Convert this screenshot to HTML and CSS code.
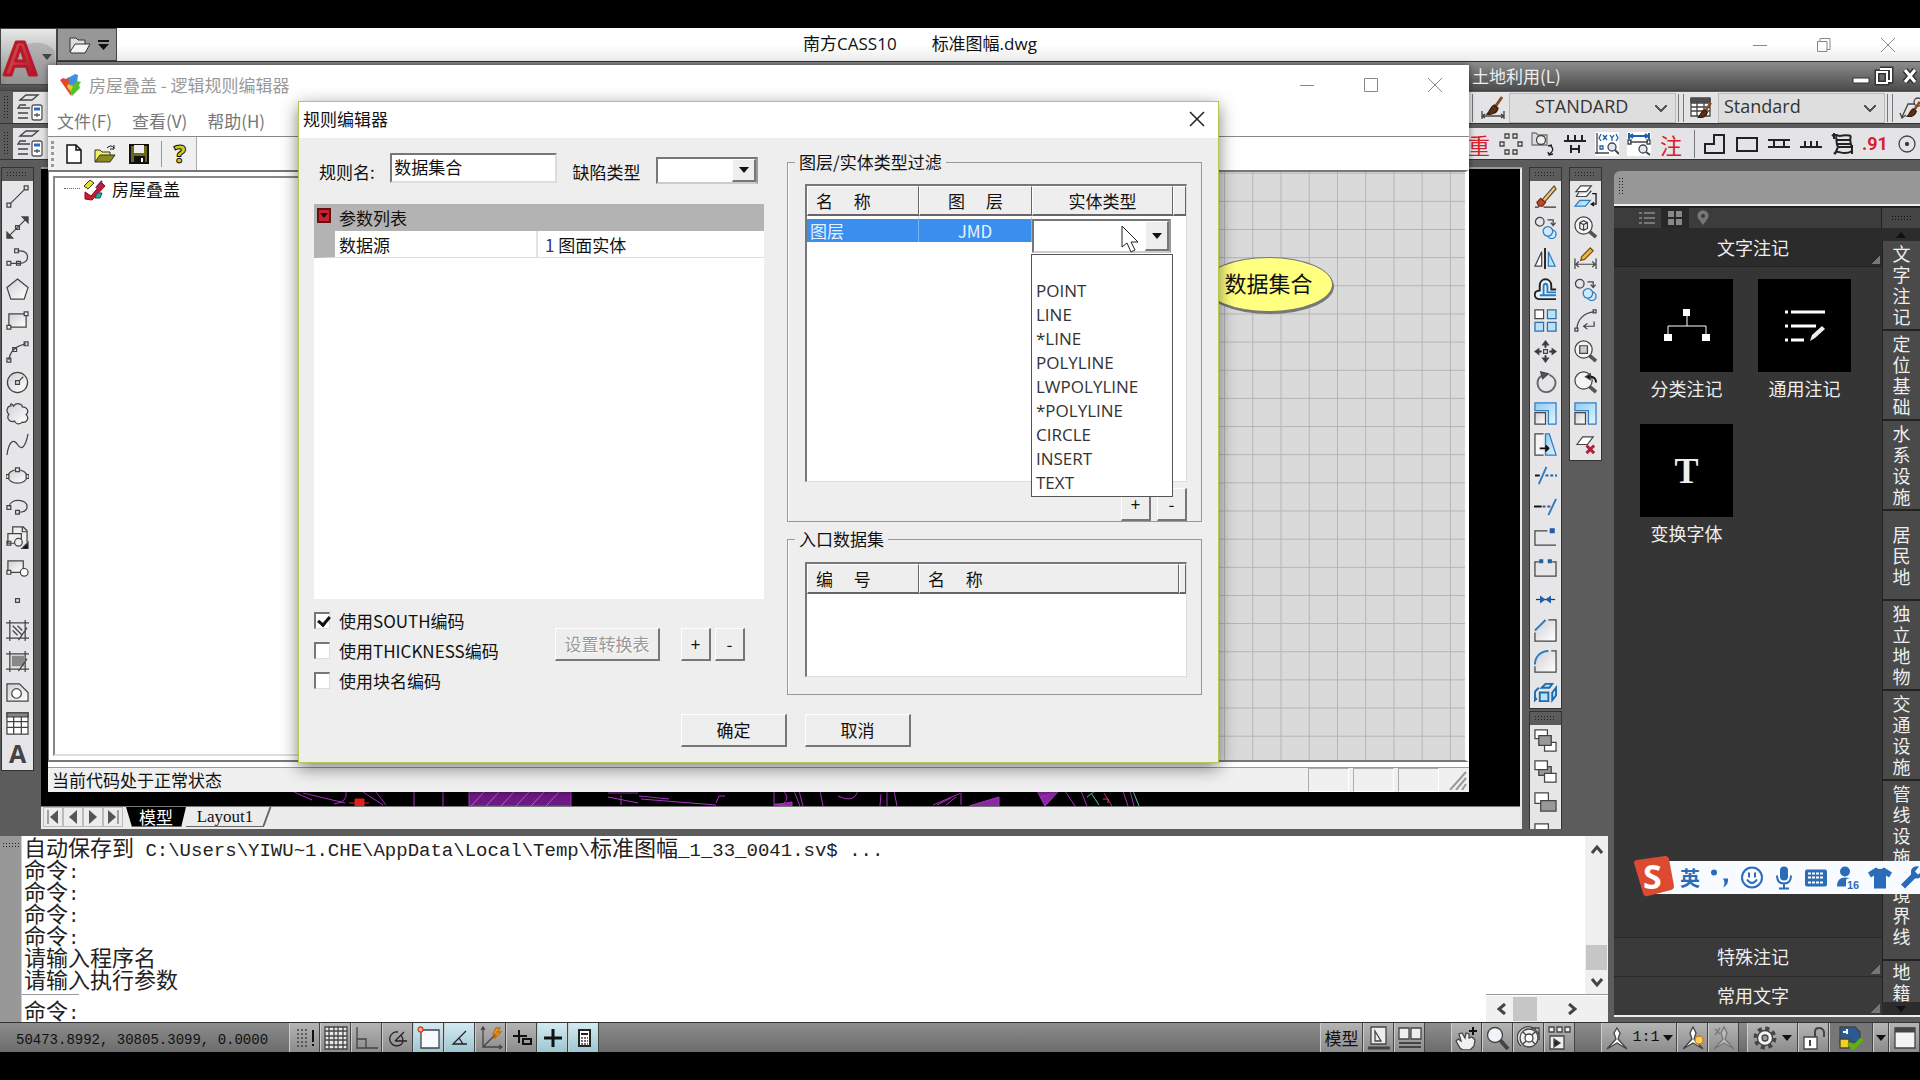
FILE: index.html
```html
<!DOCTYPE html>
<html lang="zh-CN">
<head>
    <meta charset="UTF-8">
    <meta name="viewport" content="width=device-width, initial-scale=1.0">
    <title>南方CASS10 - 标准图幅.dwg</title>
    <link rel="stylesheet" href="styles.css">
</head>
<body>
    <!-- shared icons -->
    <svg class="defs" width="0" height="0">
        <defs>
            <linearGradient id="blueFill" x1="0" y1="0" x2="1" y2="1"><stop offset="0" stop-color="#8fcdf0"/><stop offset="1" stop-color="#e2f4fd"/></linearGradient>
            <linearGradient id="grayFill" x1="0" y1="0" x2="1" y2="1"><stop offset="0" stop-color="#d0d0d4"/><stop offset="1" stop-color="#fff"/></linearGradient>
            <linearGradient id="redFill" x1="0" y1="0" x2="1" y2="1"><stop offset="0" stop-color="#f0606a"/><stop offset="1" stop-color="#a00a1c"/></linearGradient>
        </defs>
        <symbol id="i-copy" viewBox="0 0 24 24"><circle cx="6" cy="6" r="4.5"/><path d="M14 4h6v5M17.500 7l2.500 3 2.500-3"/><circle cx="18.500" cy="19" r="4.500" fill="#cfeafa" stroke="#2f7cc0"/><circle cx="14.500" cy="16" r="5" fill="#cfeafa" stroke="#2f7cc0"/></symbol>
        <symbol id="i-scale" viewBox="0 0 24 24"><path d="M1 9V1h22v22h-8V9z" fill="url(#blueFill)" stroke="#2f7cc0"/><path d="M1 11h11v12H1z" fill="url(#grayFill)"/></symbol>
        <symbol id="i-layers" viewBox="0 0 28 28"><path d="M5 7l6-5h12l-6 5zM11 12H5l-2 3h12M3 20h10M3 25h10M15 7H5"/><rect x="17" y="12" width="10" height="15" rx="2" fill="#fff" stroke="#555"/><path d="M19 16h6" stroke="#2769c4" stroke-width="3"/><path d="M19 22h6M22 20v4" stroke="#555"/></symbol>
        <symbol id="i-brush" viewBox="0 0 24 24"><path d="M12 14l9-13" stroke="#8a4a1c" stroke-width="3"/><path d="M13 9l4 3c-1 5-6 7-11 6 3-2 3-7 7-9z" fill="#5c2f18" stroke="#3a1c0c"/></symbol>
        <symbol id="i-down" viewBox="0 0 10 6"><path d="M0 0h10L5 6z" fill="#111" stroke="none"/></symbol>
    </svg>

    <div class="app">
        <header class="titlebar">
            <div class="quick">
                <button class="plain" aria-label="打开">
                    <svg width="24" height="20" viewBox="0 0 24 20"><path d="M2 17V3h6l2 2h7v4" fill="#ddd" stroke="#333"/><path d="M2 17l5-8h15l-5 9H4z" fill="#f4f4f4" stroke="#333"/></svg>
                </button>
                <svg width="11" height="10" viewBox="0 0 11 10"><path d="M0 1h11" stroke="#111" stroke-width="2"/><path d="M0 4h11L5.500 10z" fill="#111"/></svg>
            </div>
            <h1 class="title"><span>南方CASS10</span><span>标准图幅.dwg</span></h1>
            <div class="controls">
                <button class="plain" aria-label="最小化"><svg width="16" height="16" viewBox="0 0 16 16"><path d="M1 8.500h14"/></svg></button>
                <button class="plain" aria-label="还原"><svg width="16" height="16" viewBox="0 0 16 16"><path d="M4 4.500V1.500h10v11h-3M1.500 4.500h9.500v10H1.500z"/></svg></button>
                <button class="plain" aria-label="关闭"><svg width="16" height="16" viewBox="0 0 16 16"><path d="M1 1l14 14M15 1L1 15"/></svg></button>
            </div>
        </header>

        <nav class="menubar">
            <a href="#">土地利用(L)</a>
            <div class="mdi">
                <svg width="72" height="20" viewBox="0 0 72 20"><path d="M1 12h16v5H1z" fill="#fff" stroke="#333"/><path d="M28 3h11v12h-3M25 6h10v11H25z" fill="none" stroke="#333" stroke-width="5"/><path d="M28 3h11v12h-3M25 6h10v11H25z" fill="none" stroke="#fff" stroke-width="2"/><path d="M53 4l10 12M63 4L53 16" stroke="#333" stroke-width="6"/><path d="M53 4l10 12M63 4L53 16" stroke="#fff" stroke-width="3"/></svg>
            </div>
        </nav>

        <div class="toolrow">
            <div class="row-start"><i class="grip-v"></i><button class="tool" aria-label="图层"><svg width="28" height="28"><use href="#i-layers"/></svg></button></div>
            <div class="row-end styles-row">
                <i class="sep"></i>
                <button class="tool" aria-label="标注样式"><svg width="24" height="24" viewBox="0 0 24 24"><use href="#i-brush"/><path d="M1 15v8M23 15v8M2 20h20M4 18l-3 2 3 2M20 18l3 2-3 2"/></svg></button>
                <select class="style-select center" aria-label="标注样式名"><option>STANDARD</option></select>
                <i class="sep double"></i>
                <button class="tool" aria-label="表格样式"><svg width="24" height="24" viewBox="0 0 24 24"><path d="M1 2h19v18H1zM1 7h19M1 11h19M1 15h19M7 7v13M14 7v13" fill="#fff"/><path d="M1 3h19v3H1z" fill="#555"/><g transform="translate(3 6) scale(.85)"><use href="#i-brush" width="24" height="24"/></g></svg></button>
                <select class="style-select" aria-label="表格样式名"><option>Standard</option></select>
                <i class="sep double"></i>
                <button class="tool" aria-label="多重引线样式"><svg width="24" height="24" viewBox="0 0 24 24"><path d="M3 21L9 8h7M1 17l2 5 4-3"/><circle cx="19" cy="6" r="4"/><g transform="translate(3 5) scale(.85)"><use href="#i-brush" width="24" height="24"/></g></svg></button>
            </div>
        </div>

        <div class="toolrow">
            <div class="row-start"><i class="grip-v"></i><button class="tool" aria-label="图层工具"><svg width="28" height="28"><use href="#i-layers"/></svg></button></div>
            <div class="row-end cass-row">
                <button class="tool red">重</button>
                <button class="tool" aria-label="编组"><svg width="24" height="24" viewBox="0 0 24 24"><path d="M6 2h4v4H6zM14 2h4v4h-4zM1 10h4v4H1zM19 10h4v4h-4zM6 18h4v4H6zM14 18h4v4h-4z"/></svg></button>
                <button class="tool" aria-label="查看"><svg width="24" height="24" viewBox="0 0 24 24"><path d="M1 1h4l2 2h9v10H1z" fill="#ddd" stroke="#777"/><circle cx="10" cy="8" r="4.500" fill="#eee"/><path d="M20 14c3 3 2 6-2 8M21 13l-4 1M17 20l1 3 4-1" stroke="#222"/></svg></button>
                <button class="tool" aria-label="坎"><svg width="24" height="24" viewBox="0 0 24 24" class="heavy"><path d="M1 9h22M5 9V3M12 9V3M19 9V3M8 13v8M16 13v8M8 17h8"/></svg></button>
                <button class="tool" aria-label="坐标"><svg width="24" height="24" viewBox="0 0 24 24"><path d="M0 0h24v24H0z" fill="#fff" stroke="none"/><path d="M2 1v21M0 21h14"/><path d="M6 2l-2 4 2 3M8 3l4 5M12 3L8 8M15 3l2 3 2-3M17 6v3M21 2l2 4-2 3M5 14h3v3H5z" stroke="#1f5fa8"/><circle cx="17" cy="15" r="4" fill="#dfe9f5"/><path d="M20 18l4 4" stroke-width="2"/></svg></button>
                <button class="tool" aria-label="距离"><svg width="24" height="24" viewBox="0 0 24 24"><path d="M0 0h24v24H0z" fill="#fff" stroke="none"/><path d="M2 1v6M22 1v6M3 4h18M6 2L3 4l3 2M18 2l3 2-3 2" stroke="#1f5fa8" stroke-width="2"/><path d="M3 10h18M1 8h3v4H1zM20 8h3v4h-3z"/><circle cx="16" cy="17" r="4" fill="#dfe9f5"/><path d="M19 20l4 3" stroke-width="2"/></svg></button>
                <button class="tool red">注</button>
                <i class="sep"></i>
                <button class="tool" aria-label="多边房屋"><svg width="24" height="24" viewBox="0 0 24 24" class="heavy"><path d="M2 21V12h9V3h10v18z"/></svg></button>
                <button class="tool" aria-label="四点房屋"><svg width="24" height="24" viewBox="0 0 24 24" class="heavy"><path d="M2 6h20v13H2z"/></svg></button>
                <button class="tool" aria-label="围墙"><svg width="24" height="24" viewBox="0 0 24 24" class="heavy"><path d="M1 8h22M1 15h22M7 8v7M17 8v7"/></svg></button>
                <button class="tool" aria-label="陡坎"><svg width="24" height="24" viewBox="0 0 24 24" class="heavy"><path d="M1 15h22M6 15V9M12 15V9M18 15V9"/></svg></button>
                <button class="tool" aria-label="楼梯"><svg width="24" height="24" viewBox="0 0 24 24"><path d="M1 4c3-3 5 0 8 0s6-2 11 0M5 4c1 6 0 8 2 11M20 4c-2 4 0 8 1 12M5 8h14M6 12h14M7 15h15M3 22c4-6 8 3 18-3M7 15l-3 7M3 1v6M21 13v9" stroke="#222" stroke-width="2"/></svg></button>
                <button class="tool red bold">.91</button>
                <button class="tool" aria-label="控制点"><svg width="24" height="24" viewBox="0 0 24 24"><circle cx="12" cy="12" r="8"/><circle cx="12" cy="12" r="1.500" fill="#222"/></svg></button>
            </div>
        </div>

        <button class="app-button" aria-label="应用程序菜单">
            <svg width="57" height="56" viewBox="0 0 57 56"><path d="M20 18q22-10 35 4v33H4z" fill="#999" opacity=".5"/><text x="3" y="46" class="logo-a" fill="url(#redFill)">A</text><path d="M42 25h10l-5 6z" fill="#444"/></svg>
        </button>

        <main class="workspace">
            <div class="left">
                <div class="canvas-zone">
                    <div class="dock">
                        <i class="grip-h"></i>
                        <button><svg viewBox="0 0 24 24"><path d="M4 20L20 4M1 19h4v4H1zM19 1h4v4h-4z"/></svg></button>
                        <button><svg viewBox="0 0 24 24"><path d="M4 20L20 4M10 10h4v4h-4z"/><path d="M1 17v6h6zM17 1h6v6z" fill="#444"/></svg></button>
                        <button><svg viewBox="0 0 24 24"><path d="M12 4h3c10 0 10 13 0 13H5M9 2h4v4H9zM1 15h4v4H1zM11 15h4v4h-4z"/></svg></button>
                        <button><svg viewBox="0 0 24 24"><path d="M12 1l11 9-4 12H5L1 10z" fill="url(#grayFill)"/></svg></button>
                        <button><svg viewBox="0 0 24 24"><path d="M3 5h18v14H3z" fill="url(#grayFill)"/><path d="M1 17h4v4H1zM19 3h4v4h-4z" fill="#eee"/></svg></button>
                        <button><svg viewBox="0 0 24 24"><path d="M3 21C4 12 10 6 21 4M1 19h4v4H1zM19 2h4v4h-4zM7 8h4v4H7z"/></svg></button>
                        <button><svg viewBox="0 0 24 24"><circle cx="12" cy="12" r="10.500" fill="url(#grayFill)"/><path d="M10 10h4v4h-4zM14 10l4-4"/></svg></button>
                        <button><svg viewBox="0 0 24 24"><path d="M8 4c3-4 9-2 9 1 6 0 7 6 4 8 4 4 0 9-4 8-3 3-7 2-8-1-5 2-9-3-6-7-4-4-1-9 2-9-1-3 2-3 3 1z" fill="url(#grayFill)"/></svg></button>
                        <button><svg viewBox="0 0 24 24"><path d="M1 23C3 8 8 6 12 12s8 4 11-11"/></svg></button>
                        <button><svg viewBox="0 0 24 24"><ellipse cx="12" cy="13" rx="10" ry="7" fill="url(#grayFill)"/><path d="M10 4h4v4h-4zM0 11h3v4H0zM21 11h3v4h-3z" fill="#eee"/></svg></button>
                        <button><svg viewBox="0 0 24 24"><path d="M3 12C5 3 22 4 22 12c0 4-4 6-9 6M1 11h4v4H1zM10 16h4v4h-4z"/></svg></button>
                        <button><svg viewBox="0 0 24 24"><path d="M7 8V1h11l4 4v12M17 1v5h5M2 8h14v10H2zM1 16h4v4H1z" fill="#eee"/><circle cx="13" cy="17" r="4" fill="#eee"/><path d="M23 17v7h-7z" fill="#111"/></svg></button>
                        <button><svg viewBox="0 0 24 24"><path d="M2 4h16v12H2z" fill="url(#grayFill)"/><circle cx="19" cy="16" r="4" fill="#fff"/><path d="M1 14h4v4H1z" fill="#eee"/></svg></button>
                        <button><svg viewBox="0 0 24 24"><path d="M10 11h4v4h-4z"/></svg></button>
                        <button><svg viewBox="0 0 24 24"><path d="M4 1v22M20 1v22M0 4h24M0 20h24M7 7l10 10M7 12l5 5M12 7l5 5M13 22L22 9"/></svg></button>
                        <button><svg viewBox="0 0 24 24"><path d="M6 6h13v11H6z" fill="#888" stroke="none"/><path d="M4 1v22M20 1v22M0 4h24M0 20h24M13 22L22 9"/></svg></button>
                        <button><svg viewBox="0 0 24 24"><path d="M1 3h13l9 9v9H1z" fill="url(#grayFill)"/><circle cx="11" cy="13" r="5" fill="#fff"/></svg></button>
                        <button><svg viewBox="0 0 24 24"><path d="M1 1h22v22H1zM1 10h22M1 16h22M8 5v18M16 5v18" fill="#fff"/><path d="M1 1h22v4H1z" fill="#888"/></svg></button>
                        <button class="letter">A</button>
                    </div>

                    <div class="drawing">
                        <div class="model-space">
                            <svg width="1478" height="15" viewBox="0 0 1478 15" fill="none" stroke="#b030c8">
                                <path d="M253 1l18 8M262 2l42 10M305 1q2 10-12 12M322 1l20 13M335 1l10 13M373 0v15M402 0v15M567 2h30M567 6l30 6M580 4v10M598 5l30 3M600 8l75 6M675 12l3-7h6M733 0v15M742 0q8 6 0 13h-8M753 0l6 15M758 0l4 15M779 0l3 15M797 5q16 8 20-5M839 15l1-12M846 0v15M853 0l3 15M892 14l28-12v12M896 14l14-7M905 14l10-8M1040 0l6 15M1063 2l8 13M1082 0l5 15M1089 0l4 15"/>
                                <path d="M428 0h102v15H428z" fill="#6a1a80"/>
                                <path d="M430 15l14-15M445 15l14-15M460 15l14-15M475 15l14-15M490 15l14-15M505 15l14-15" stroke="#c850e0"/>
                                <path d="M996 0h22l-14 15zM1000 6l14-4M1024 0l10 15M928 15l30-9v9M733 14l18-3v4z" fill="#8a28a0"/>
                                <path d="M314 8h9v7h-9z" fill="#e02020" stroke="#e02020"/><path d="M308 12h20" stroke="#e02020"/>
                                <path d="M1046 6l8-6M1050 2l8 12M1092 0l6 15" stroke="#50c8b0"/><path d="M1062 8h5v4" stroke="#d05030"/>
                            </svg>
                        </div>
                        <div class="layout-tabs">
                            <button class="nav"><svg width="12" height="14" viewBox="0 0 12 14"><path d="M1 0v14" stroke="#555"/><path d="M11 0v14L3 7z" fill="#555"/></svg></button>
                            <button class="nav"><svg width="12" height="14" viewBox="0 0 12 14"><path d="M10 0v14L2 7z" fill="#555"/></svg></button>
                            <button class="nav"><svg width="12" height="14" viewBox="0 0 12 14"><path d="M2 0v14l8-7z" fill="#555"/></svg></button>
                            <button class="nav"><svg width="12" height="14" viewBox="0 0 12 14"><path d="M11 0v14" stroke="#555"/><path d="M1 0v14l8-7z" fill="#555"/></svg></button>
                            <button class="tab active">模型</button>
                            <button class="tab">Layout1</button>
                        </div>
                    </div>

                    <div class="dock-col">
                        <div class="dock">
                            <i class="grip-h"></i>
                            <button><svg viewBox="0 0 24 24"><path d="M8 16L21 1l2 3-12 14z" fill="#e8c890" stroke="#6a4a20"/><path d="M7 14l5 4-3 4H5l-2-4z" fill="#b84a28" stroke="#7a2a14"/><path d="M1 23h4M10 23h13" stroke="#333"/></svg></button>
                            <button><svg><use href="#i-copy"/></svg></button>
                            <button><svg viewBox="0 0 24 24"><path d="M8 5v15H1z" fill="#fff"/><path d="M15 5v15h7z" fill="url(#blueFill)" stroke="#2f7cc0"/><path d="M11.500 1v22" stroke="#222" stroke-width="2"/></svg></button>
                            <button><svg viewBox="0 0 24 24"><path d="M23 22H6c-7 0-7-9 0-9V8c0-9 12-9 12 0v4h5" fill="#e2f4fd" stroke="#222" stroke-width="2"/><path d="M23 18H6M10 18V9c0-4 4-4 4 0v6h9" stroke="#2f7cc0" stroke-width="2"/></svg></button>
                            <button><svg viewBox="0 0 24 24"><path d="M1 1h9v9H1z" fill="#fff"/><path d="M14 1h9v9h-9zM1 14h9v9H1zM14 14h9v9h-9z" fill="#b9e2f8" stroke="#2f6ca0"/></svg></button>
                            <button><svg viewBox="0 0 24 24"><path d="M10 10h4v4h-4z"/><path d="M12 8V3M12 16v5M8 12H3M16 12h5" stroke="#333" stroke-width="2"/><path d="M9 5l3-4 3 4zM9 19l3 4 3-4zM5 9l-4 3 4 3zM19 9l4 3-4 3z" fill="#333"/></svg></button>
                            <button><svg viewBox="0 0 24 24"><path d="M16 4c12 5 5 19-4 18S0 8 10 4" stroke="#666" stroke-width="2"/><path d="M7 1l8 2-6 5z" fill="#555"/></svg></button>
                            <button><svg><use href="#i-scale"/></svg></button>
                            <button><svg viewBox="0 0 24 24"><path d="M10 1H1v22h9" fill="#f4f4f4"/><path d="M12 1h4l7 22H12z" fill="url(#blueFill)" stroke="#2f7cc0"/><path d="M6 16h9M12 13l3 3-3 3" stroke="#111" stroke-width="2"/></svg></button>
                            <button><svg viewBox="0 0 24 24"><path d="M1 12h5" stroke="#111" stroke-width="2"/><path d="M12 12h12" stroke-dasharray="3 2" stroke="#2f5c90" stroke-width="2"/><path d="M5 21L13 3" stroke="#2f7cc0" stroke-width="2"/></svg></button>
                            <button><svg viewBox="0 0 24 24"><path d="M0 12h8" stroke="#111" stroke-width="2"/><path d="M9 12h8" stroke-dasharray="3 2" stroke="#2f5c90" stroke-width="2"/><path d="M15 21L23 4" stroke="#2f7cc0" stroke-width="2"/></svg></button>
                            <button><svg viewBox="0 0 24 24"><path d="M14 5H1v15h22" fill="none"/><path d="M17 3h4v4h-4z" fill="#1f5fa8" stroke="#1f5fa8"/></svg></button>
                            <button><svg viewBox="0 0 24 24"><path d="M5 5H1v15h22V5h-4" fill="none"/><path d="M6 3h3v3H6zM15 3h3v3h-3z" fill="#1f5fa8" stroke="#1f5fa8"/></svg></button>
                            <button><svg viewBox="0 0 24 24"><path d="M2 12h20" stroke="#333"/><path d="M7 9l4 3-4 3zM17 9l-4 3 4 3z" fill="#1f5fa8" stroke="#1f5fa8"/></svg></button>
                            <button><svg viewBox="0 0 24 24"><path d="M1 14v9h22V1h-9z" fill="url(#grayFill)" stroke="none"/><path d="M1 14v9h22V1h-8"/><path d="M1 12L12 1" stroke="#2f7cc0" stroke-width="2"/></svg></button>
                            <button><svg viewBox="0 0 24 24"><path d="M1 16v7h22V1h-5C8 1 1 8 1 16z" fill="url(#grayFill)" stroke="none"/><path d="M1 17v6h22V1h-5"/><path d="M1 15C1 8 6 1 15 1" stroke="#2f7cc0" stroke-width="2"/></svg></button>
                            <button><svg viewBox="0 0 24 24"><path d="M6 12h9v9H6zM8 7l4-4h7l-3 4zM1 11l4-4M1 11v9l2-2M19 12l4-5v8l-4 5z" fill="#b9e2f8" stroke="#1f6ca8" stroke-width="2"/></svg></button>
                        </div>
                        <div class="dock">
                            <i class="grip-h"></i>
                            <button><svg viewBox="0 0 24 24"><path d="M1 1h13v9H1zM11 14h12v9H11z" fill="#fff"/><path d="M5 7h13v10H5z" fill="#999"/></svg></button>
                            <button><svg viewBox="0 0 24 24"><path d="M5 7h13v9H5z" fill="#999"/><path d="M1 1h13v9H1zM11 14h12v9H11z" fill="#fff"/></svg></button>
                            <button><svg viewBox="0 0 24 24"><path d="M1 2h14v11H1z" fill="#fff"/><path d="M7 10h16v11H7z" fill="#999"/></svg></button>
                            <button><svg viewBox="0 0 24 24"><path d="M8 9h15v12H8z" fill="#999"/><path d="M1 2h14v12H1z" fill="#fff"/></svg></button>
                        </div>
                    </div>

                    <div class="dock-col">
                        <div class="dock">
                            <i class="grip-h"></i>
                            <button><svg viewBox="0 0 24 24"><path d="M2 7l5-6h11l-5 6zM2 12l3-4M2 12h11l5-6" fill="#fff"/><path d="M1 22l5-6h11l-5 6z" fill="url(#blueFill)" stroke="#2f7cc0"/><path d="M19 9h4v11h-4M21 18l-3 2 3 2" stroke="#111"/></svg></button>
                            <button><svg viewBox="0 0 24 24"><path d="M16 16l7 6" stroke="#555" stroke-width="4"/><circle cx="10" cy="10" r="9" fill="#f4f4f4"/><path d="M6 7l4-2 4 2v6l-4 2-4-2zM6 7l4 2 4-2M10 9v6"/></svg></button>
                            <button><svg viewBox="0 0 24 24"><path d="M1 12v11M23 12v11M2 18h20M5 15l-3 3 3 3M19 15l3 3-3 3"/><path d="M7 14l1-4L17 1l3 3-9 9z" fill="#f0b840" stroke="#7a5014"/></svg></button>
                            <button><svg><use href="#i-copy"/></svg></button>
                            <button><svg viewBox="0 0 24 24"><path d="M3 20C4 11 10 4 21 3M1 20h3v3H1zM20 1h3v3h-3zM21 13v5h-10M14 15l-4 3 4 3"/></svg></button>
                            <button><svg viewBox="0 0 24 24"><path d="M16 16l7 6" stroke="#555" stroke-width="4"/><circle cx="10" cy="10" r="9" fill="#f4f4f4"/><path d="M6 6h8v8H6z" fill="#ccc"/></svg></button>
                            <button><svg viewBox="0 0 24 24"><path d="M16 16l7 6" stroke="#555" stroke-width="4"/><circle cx="10" cy="10" r="9" fill="#f4f4f4"/><path d="M15 6h3q5 1 5 6" stroke="#111" stroke-width="2"/><path d="M12 6l5-3v6z" fill="#111"/></svg></button>
                            <button><svg><use href="#i-scale"/></svg></button>
                            <button><svg viewBox="0 0 24 24"><path d="M3 12l6-8h11l-6 8z" fill="#fff"/><path d="M13 13l8 8M21 13l-8 8" stroke="#b02038" stroke-width="3"/></svg></button>
                        </div>
                    </div>
                </div>

                <section class="command">
                    <i class="cmd-grip"></i>
                    <div class="cmd-body">
                        <div class="cmd-log">
                            <div class="log-text">
                                <p>自动保存到<span> C:\Users\YIWU~1.CHE\AppData\Local\Temp\</span>标准图幅<span>_1_33_0041.sv$ ...</span></p>
                                <p>命令<span>:</span></p>
                                <p>命令<span>:</span></p>
                                <p>命令<span>:</span></p>
                                <p>命令<span>:</span></p>
                                <p>请输入程序名</p>
                                <p>请输入执行参数</p>
                            </div>
                            <div class="scroll-v">
                                <svg width="12" height="10" viewBox="0 0 12 10"><path d="M1 9l5-6 5 6"/></svg>
                                <i></i>
                                <svg width="12" height="10" viewBox="0 0 12 10"><path d="M1 1l5 6 5-6"/></svg>
                            </div>
                        </div>
                        <div class="cmd-line">
                            <label for="cmd">命令<span>:</span></label>
                            <input id="cmd" type="text">
                            <div class="scroll-h">
                                <svg width="10" height="12" viewBox="0 0 10 12"><path d="M8 1L2 6l6 5"/></svg>
                                <i></i>
                                <svg width="10" height="12" viewBox="0 0 10 12"><path d="M2 1l6 5-6 5"/></svg>
                            </div>
                        </div>
                    </div>
                </section>
            </div>

            <aside class="palette">
                <div class="palette-head"><i class="dots"></i></div>
                <div class="palette-body">
                    <div class="palette-main">
                        <div class="view-modes">
                            <button><svg width="16" height="14" viewBox="0 0 16 14"><path d="M0 2h3M5 2h11M0 7h3M5 7h11M0 12h3M5 12h11" stroke="#777" stroke-width="2"/></svg></button>
                            <button class="on"><svg width="14" height="14" viewBox="0 0 14 14"><path d="M0 0h6v6H0zM8 0h6v6H8zM0 8h6v6H0zM8 8h6v6H8z" fill="#888"/></svg></button>
                            <button><svg width="12" height="16" viewBox="0 0 12 16"><path d="M6 15L1 8a5.500 5.500 0 1 1 10 0zM6 4a2 2 0 1 0 .1 0z" fill="#777" fill-rule="evenodd"/></svg></button>
                        </div>
                        <button class="group open">文字注记</button>
                        <div class="tiles">
                            <button class="tile">
                                <span class="thumb"><svg width="48" height="36" viewBox="0 0 48 36"><path d="M24 6v12M5 28V18h38v10" fill="none" stroke="#fff"/><path d="M20 1h7v7h-7zM1 26h8v7H1zM39 26h8v7h-8z" fill="#fff"/></svg></span>
                                分类注记
                            </button>
                            <button class="tile">
                                <span class="thumb"><svg width="42" height="36" viewBox="0 0 42 36"><path d="M1 4h3M7 4h34M1 18h3M7 18h25M1 32h3M7 32h13" stroke="#fff" stroke-width="3"/><path d="M26 33l2-6 10-9 3 3-10 9z" fill="#eee"/></svg></span>
                                通用注记
                            </button>
                            <button class="tile">
                                <span class="thumb big-t">T</span>
                                变换字体
                            </button>
                        </div>
                        <button class="group">特殊注记</button>
                        <button class="group">常用文字</button>
                    </div>
                    <div class="side-tabs">
                        <i class="dots"></i>
                        <i class="arrow"><svg width="10" height="6" viewBox="0 0 10 6"><path d="M5 0l5 6H0z" fill="#111"/></svg></i>
                        <div class="tab-list">
                            <button>文字注记</button>
                            <button>定位基础</button>
                            <button>水系设施</button>
                            <button>居民地</button>
                            <button>独立地物</button>
                            <button>交通设施</button>
                            <button>管线设施</button>
                            <button>境界线</button>
                            <button>地籍</button>
                        </div>
                        <i class="arrow"><svg width="10" height="6"><use href="#i-down"/></svg></i>
                    </div>
                </div>
            </aside>
        </main>

        <footer class="statusbar">
            <span class="coords">50473.8992, 30805.3099, 0.0000</span>
            <button><svg viewBox="0 0 24 24"><path d="M4 4h12M4 8h12M4 12h12M4 16h12M4 20h12" stroke-dasharray="2 2"/><path d="M20 4v16" stroke="#111" stroke-dasharray="12 2" stroke-width="2"/></svg></button>
            <button><svg viewBox="0 0 24 24"><path d="M1 1h22v22H1zM1 5h22M1 10h22M1 14h22M1 19h22M5 1v22M10 1v22M14 1v22M19 1v22" fill="#e8e8e8"/></svg></button>
            <button><svg viewBox="0 0 24 24"><path d="M2 1v21h21M2 13h9v9"/></svg></button>
            <button><svg viewBox="0 0 24 24"><path d="M12 6a7 7 0 1 0 5 10M9 15h12M9 15l9-9M15 9q2 3 2 6" stroke="#222"/></svg></button>
            <button class="on"><svg viewBox="0 0 24 24"><path d="M4 4h18v18H4z" fill="#f8f8ff"/><circle cx="3.500" cy="3.500" r="2.500" fill="#ffb080" stroke="#e04020"/></svg></button>
            <button class="on"><svg viewBox="0 0 24 24"><path d="M18 5L5 18h14M11 12l4 6" stroke="#222"/></svg></button>
            <button><svg viewBox="0 0 24 24"><path d="M4 1v20h19M4 21L17 8M2 4l2-3 2 3M20 19l3 2-3 2"/><path d="M17 2h4l-3 4h4l-7 7 2-5h-3z" fill="#f0a020" stroke="#c07010"/></svg></button>
            <button><svg viewBox="0 0 24 24"><path d="M3 10h14M9 4v13M13 13h8v5h-8z" stroke="#111" stroke-width="2"/></svg></button>
            <button class="on"><svg viewBox="0 0 24 24"><path d="M3 12h18M12 3v18" stroke="#111" stroke-width="3"/></svg></button>
            <button class="on"><svg viewBox="0 0 24 24"><path d="M7 4h11v16H7z" fill="#fff" stroke="#222" stroke-width="2"/><path d="M9 8h7" stroke="#222" stroke-width="2"/><path d="M9 12h7M9 15h7M9 18h7" stroke-dasharray="2 1"/></svg></button>
            <div class="status-right">
                <button class="model">模型</button>
                <button><svg viewBox="0 0 24 24"><path d="M4 1h15v17H4z" fill="#eee"/><path d="M8 5v10h6z"/><path d="M1 22h22" stroke-width="3"/></svg></button>
                <button><svg viewBox="0 0 24 24"><path d="M1 2h10v11H1zM13 2h10v11H13z" fill="#eee"/><path d="M1 17h22M1 21h22" stroke-width="2"/></svg></button>
                <i class="gap"></i>
                <button><svg viewBox="0 0 24 24"><path d="M5 22l-4-7 2-2 3 2-2-7 3-1 3 5 1-5 3 1v4l3-1 3 3-1 6-4 4H8z" fill="#f0f0f0"/><path d="M18 1v8M14 5h8" stroke="#111" stroke-width="2"/></svg></button>
                <button><svg viewBox="0 0 24 24"><path d="M14 14l8 9" stroke-width="4"/><circle cx="9" cy="9" r="7.500" fill="#f0f4f8"/></svg></button>
                <button><svg viewBox="0 0 24 24"><path d="M4 20A11 11 0 1 1 22 14V2h-8" fill="#ddd"/><circle cx="12" cy="12" r="9" fill="#eee"/><path d="M6 6l12 12M18 6L6 18"/><circle cx="12" cy="12" r="4" fill="#fff"/></svg></button>
                <button><svg viewBox="0 0 24 24"><path d="M1 1h5v5H1zM9 1h5v5H9zM17 1h5v5h-5zM2 10h14v13H2z" fill="#eee"/><path d="M6 13l6 4-6 4z" fill="#222"/></svg></button>
                <i class="gap"></i>
                <button class="scale"><svg viewBox="0 0 24 24"><path d="M12 2l3 5-2 6 9 10-10-6-10 6 9-10-2-6z" fill="#fff"/></svg>1:1<svg class="caret"><use href="#i-down"/></svg></button>
                <button><svg viewBox="0 0 24 24"><path d="M12 1l3 6-2 6 9 10-10-6-10 6 9-10-2-6z" fill="#fff"/><circle cx="18" cy="14" r="4" fill="#ffd060" stroke="#d08010"/></svg></button>
                <button><svg viewBox="0 0 24 24"><path d="M12 1l3 6-2 6 9 10-10-6-10 6 9-10-2-6z" fill="#bbb" stroke="#777"/><path d="M3 3l5 5M8 2L3 9" stroke="#777"/></svg></button>
                <i class="gap thin"></i>
                <button class="gear"><svg viewBox="0 0 24 24"><circle cx="12" cy="12" r="9.500" fill="none" stroke-width="4" stroke-dasharray="4 3.460"/><circle cx="12" cy="12" r="7.500" fill="#f4f4f4"/><circle cx="12" cy="12" r="3" fill="#999"/></svg><svg class="caret"><use href="#i-down"/></svg></button>
                <button><svg viewBox="0 0 24 24"><path d="M2 11h13v12H2z" fill="#fff"/><path d="M13 11V6q0-4 4-4t5 4v5M8 14v6" stroke-width="2"/></svg></button>
                <button class="tray"><svg viewBox="0 0 24 24"><path d="M1 1h15l5 5v10H1z" fill="#2a5a90"/><path d="M1 13h9v9H1z" fill="#f0d020"/><path d="M4 6h4M8 3v5" stroke="#fff" stroke-width="2"/><path d="M10 17l4 5 9-9" stroke="#60b010" stroke-width="4"/></svg></button>
                <button class="mini"><svg class="caret"><use href="#i-down"/></svg></button>
                <button><svg viewBox="0 0 24 24"><path d="M2 2h20v20H2z" fill="#f4f4f4"/><path d="M2 4h20" stroke-width="5"/></svg></button>
            </div>
        </footer>

        <!-- rule editor main window -->
        <section class="window">
            <div class="window-title">
                <svg width="24" height="24" viewBox="0 0 24 24"><path d="M1 7l3-2 3 1 3-2 3 9-1 10z" fill="#e04830"/><path d="M9 5l7-4 3 1-1 8-6 5z" fill="#4090e0"/><path d="M12 14l6-6 4 1-2 3 1 3-8 8-4-8z" fill="#58c030"/><path d="M9 11l5 2-2 5-4-4z" fill="#f8c020"/></svg>
                <h2>房屋叠盖 - 逻辑规则编辑器</h2>
                <div class="controls">
                    <button class="plain" aria-label="最小化"><svg width="16" height="16" viewBox="0 0 16 16"><path d="M1 8.500h14"/></svg></button>
                    <button class="plain" aria-label="最大化"><svg width="16" height="16" viewBox="0 0 16 16"><path d="M1.500 1.500h13v13h-13z"/></svg></button>
                    <button class="plain" aria-label="关闭"><svg width="16" height="16" viewBox="0 0 16 16"><path d="M1 1l14 14M15 1L1 15"/></svg></button>
                </div>
            </div>
            <nav class="window-menu"><a href="#">文件(F)</a><a href="#">查看(V)</a><a href="#">帮助(H)</a></nav>
            <div class="window-tools">
                <div class="tools-left">
                    <i class="dots-v"></i>
                    <button class="plain" aria-label="新建"><svg width="16" height="20" viewBox="0 0 16 20"><path d="M1 1h9l5 5v13H1zM10 1v5h5" fill="#fff" stroke="#111" stroke-width="1.500"/></svg></button>
                    <button class="plain" aria-label="打开"><svg width="23" height="20" viewBox="0 0 23 20"><path d="M1 18V6h5l2 2h8v3" fill="#f0f060" stroke="#333"/><path d="M1 18l5-7h15l-5 7z" fill="#8a8a20" stroke="#333"/><path d="M13 4q4-4 7 0M20 1v4h-4" fill="none" stroke="#111"/></svg></button>
                    <button class="plain" aria-label="保存"><svg width="20" height="20" viewBox="0 0 20 20"><path d="M1 1h18v18H1z" fill="#6a6a18" stroke="#111" stroke-width="2"/><path d="M5 1h10v8H5z" fill="#eee"/><path d="M5 12h11v7H5z" fill="#111"/><path d="M12 14h2v4h-2z" fill="#fff"/></svg></button>
                    <i class="split"></i>
                    <button class="plain help" aria-label="帮助">?</button>
                </div>
            </div>
            <div class="window-body">
                <div class="tree">
                    <i class="dotted"></i>
                    <svg width="23" height="22" viewBox="0 0 23 22"><path d="M1 7l6-6 4 3-6 6z" fill="#e8e020" stroke="#333"/><path d="M2 13l6 4L19 4l3 3L9 21l-7-1z" fill="#d01828" stroke="#801020"/><path d="M14 14h5l-2 5h-5z" fill="#28a8a8" stroke="#155"/><path d="M13 9l6-7" stroke="#802080" stroke-width="2"/></svg>
                    <span>房屋叠盖</span>
                </div>
                <div class="flow">
                    <svg width="100%" height="100%">
                        <defs><pattern id="grid" x="17.700" y="0.700" width="28.230" height="28.150" patternUnits="userSpaceOnUse"><path d="M.5 0v29M0 .5h29" stroke="#b4b4b4" fill="none"/></pattern></defs>
                        <rect width="100%" height="100%" fill="url(#grid)"/>
                    </svg>
                    <div class="node">数据集合</div>
                </div>
            </div>
            <div class="window-status">
                <span>当前代码处于正常状态</span>
                <i></i><i></i><i></i>
                <svg width="18" height="20" viewBox="0 0 18 20"><path d="M1 20L17 2M7 20L17 8M13 20l4-6" stroke="#999" stroke-width="2"/></svg>
            </div>
        </section>

        <!-- rule dialog -->
        <form class="dialog">
            <div class="dialog-title">
                <h2>规则编辑器</h2>
                <button type="button" class="plain" aria-label="关闭"><svg width="16" height="16" viewBox="0 0 16 16"><path d="M1 1l14 14M15 1L1 15" stroke="#222" stroke-width="1.500"/></svg></button>
            </div>
            <div class="dialog-body">
                <div class="dialog-left">
                    <div class="fields">
                        <label for="ruleName">规则名:</label>
                        <input id="ruleName" type="text" value="数据集合">
                        <label for="defect">缺陷类型</label>
                        <div class="combo"><select id="defect"><option></option></select><i><svg width="10" height="6"><use href="#i-down"/></svg></i></div>
                    </div>
                    <div class="params">
                        <div class="params-head"><i><svg width="8" height="5" viewBox="0 0 10 6"><use href="#i-down"/></svg></i>参数列表</div>
                        <div class="params-row"><span>数据源</span><span><b>1</b> 图面实体</span></div>
                    </div>
                    <div class="options">
                        <div class="checks">
                            <label><input type="checkbox" checked>使用SOUTH编码</label>
                            <label><input type="checkbox">使用THICKNESS编码</label>
                            <label><input type="checkbox">使用块名编码</label>
                        </div>
                        <div class="convert">
                            <button type="button" class="btn" disabled>设置转换表</button>
                            <button type="button" class="btn small">+</button>
                            <button type="button" class="btn small">-</button>
                        </div>
                    </div>
                </div>
                <div class="dialog-right">
                    <fieldset>
                        <legend>图层/实体类型过滤</legend>
                        <div class="list tall">
                            <table>
                                <colgroup><col class="c-name"><col class="c-layer"><col class="c-type"><col></colgroup>
                                <thead><tr><th>名　 称</th><th class="mid">图　 层</th><th class="mid">实体类型</th><th></th></tr></thead>
                                <tbody>
                                    <tr>
                                        <td class="sel">图层</td>
                                        <td class="sel mid">JMD</td>
                                        <td class="editor">
                                            <div class="combo cell"><select aria-label="实体类型"><option></option></select><i><svg width="10" height="6"><use href="#i-down"/></svg></i></div>
                                            <ul class="dropdown" role="listbox">
                                                <li></li><li>POINT</li><li>LINE</li><li>*LINE</li><li>POLYLINE</li><li>LWPOLYLINE</li><li>*POLYLINE</li><li>CIRCLE</li><li>INSERT</li><li>TEXT</li>
                                            </ul>
                                            <svg class="cursor" width="18" height="28" viewBox="0 0 18 28"><path d="M1 1v21l5-4 4 9 4-2-4-8h7z" fill="#fff" stroke="#222"/></svg>
                                        </td>
                                        <td></td>
                                    </tr>
                                </tbody>
                            </table>
                        </div>
                        <div class="list-buttons">
                            <button type="button" class="btn small">+</button>
                            <button type="button" class="btn small">-</button>
                        </div>
                    </fieldset>
                    <fieldset class="second">
                        <legend>入口数据集</legend>
                        <div class="list short">
                            <table>
                                <colgroup><col class="c-name"><col class="c-wide"><col></colgroup>
                                <thead><tr><th>编　 号</th><th>名　 称</th><th></th></tr></thead>
                            </table>
                        </div>
                    </fieldset>
                </div>
            </div>
            <div class="dialog-foot">
                <button type="button" class="btn wide">确定</button>
                <button type="button" class="btn wide">取消</button>
            </div>
        </form>

        <!-- input method bar -->
        <div class="ime">
            <svg class="ime-logo" width="42" height="42" viewBox="0 0 42 42"><path d="M1 8q0-3 3-3L32 1q3 0 4 3l5 27q0 3-3 4l-23 6q-4 1-5-3z" fill="#dd4a32"/><text x="10" y="34">S</text></svg>
            <span>英</span>
            <svg viewBox="0 0 24 24"><circle cx="6" cy="7" r="3"/><path d="M15 13h5q1 6-5 9 3-4 0-9z"/></svg>
            <svg viewBox="0 0 24 24"><circle cx="12" cy="12" r="10" fill="none" stroke="#2b6cb8" stroke-width="2"/><path d="M8 7h2v5H8zM14 7h2v5h-2z"/><path d="M7 14q5 7 10 0" fill="none" stroke="#2b6cb8" stroke-width="2"/></svg>
            <svg viewBox="0 0 24 24"><rect x="8" y="1" width="8" height="14" rx="4"/><path d="M5 10q0 8 7 8t7-8M12 18v4M7 23h10" fill="none" stroke="#2b6cb8" stroke-width="2"/></svg>
            <svg viewBox="0 0 24 24"><rect x="1" y="4" width="22" height="17" rx="2"/><path d="M4 8h16M4 12h16M4 17h16" stroke="#fff" stroke-width="2" stroke-dasharray="3 1"/></svg>
            <svg viewBox="0 0 24 24"><circle cx="9" cy="6" r="5"/><path d="M1 21q0-9 8-9 6 0 7 4v5z"/><rect x="10" y="13" width="14" height="11" rx="2" fill="#fff"/><text x="11" y="23" class="tiny">16</text></svg>
            <svg viewBox="0 0 24 24"><path d="M8 2q4 3 8 0l8 5-3 5-3-2v13H6V10l-3 2-3-5z"/></svg>
            <svg viewBox="0 0 24 24"><path d="M23 5l-5 4-3-3 4-5q-6-1-8 4v4L1 19l4 4 10-10q7 1 8-8z"/></svg>
        </div>
    </div>
</body>
</html>
```
FILE: styles.css
```css
* {
    margin: 0;
    padding: 0;
    box-sizing: border-box;
}

body {
    background: #000;
    font-family: "Noto Sans CJK SC", "Noto Sans", sans-serif;
    font-size: 17px;
    line-height: 20px;
    color: #111;
    overflow: hidden;
}

button, input, select {
    font: inherit;
    color: inherit;
}

button {
    border: none;
    background: none;
    display: flex;
    align-items: center;
    justify-content: center;
    flex: none;
}

svg {
    display: block;
    flex: none;
}

i {
    display: block;
    flex: none;
}

h1, h2 {
    font-size: 17px;
    font-weight: normal;
}

a {
    color: inherit;
    text-decoration: none;
}

.defs {
    position: absolute;
}

.app {
    height: 100vh;
    background: #5c5c5c;
    border: solid #000;
    border-width: 28px 0;
    display: flex;
    flex-direction: column;
    position: relative;
    overflow: hidden;
}

/* title and menu bars */
.titlebar {
    height: 34px;
    flex: none;
    display: flex;
    align-items: center;
    padding-left: 57px;
    background: linear-gradient(#fff 50%, #ececec);
    border-bottom: 1px solid #333;
}

.quick {
    width: 60px;
    height: 33px;
    padding: 0 7px 0 10px;
    display: flex;
    align-items: center;
    justify-content: space-between;
    background: #979797;
    border: 1px solid #444;
}

.title {
    flex: 1;
    padding: 0 5px 2px 0;
    display: flex;
    justify-content: center;
    gap: 35px;
    font-family: "Open Sans", "Noto Sans CJK SC", sans-serif;
}

.controls {
    display: flex;
}

.controls .plain {
    width: 64px;
    height: 32px;
}

.controls path {
    fill: none;
    stroke: #888;
}

.menubar {
    height: 29px;
    flex: none;
    padding: 0 0 0 1472px;
    display: flex;
    align-items: center;
    justify-content: space-between;
    background: linear-gradient(#8c8c8c, #4c4c4c);
    border-bottom: 1px solid #444;
    color: #eee;
}

.menubar a {
    flex: none;
}

.mdi {
    margin-right: -4px;
}

.app-button {
    position: absolute;
    left: 0;
    top: 0;
    width: 57px;
    height: 57px;
    background: linear-gradient(#e8e8e8, #8a8a8a);
    border: 1px solid #444;
}

.logo-a {
    font-family: "Liberation Sans", sans-serif;
    font-size: 48px;
    font-weight: bold;
    stroke: #b81828;
    stroke-width: 3;
    stroke-linejoin: round;
}

/* toolbars */
.toolrow {
    height: 32px;
    margin: 1px 0 3px;
    flex: none;
    display: flex;
    justify-content: space-between;
    border-bottom: 1px solid #333;
    background: #e4e4e6;
}

.row-start {
    display: flex;
}

.grip-v {
    width: 13px;
    background: radial-gradient(#222 1px, transparent 1px) 0 0 / 3px 3px #5c5c5c;
    border: 3px solid #5c5c5c;
}

.row-end {
    display: flex;
    align-items: center;
    overflow: hidden;
}

.styles-row {
    width: 451px;
}

.cass-row {
    width: 457px;
}

.tool {
    width: 32px;
    height: 30px;
}

.tool svg, .dock svg, .statusbar svg {
    fill: none;
    stroke: #444;
    stroke-width: 1.3;
}

.tool .heavy {
    stroke: #222;
    stroke-width: 2;
}

.tool.red {
    color: #d8202c;
    font-size: 22px;
}

.tool.bold {
    font-family: "Roboto", sans-serif;
    font-size: 18px;
    font-weight: bold;
}

.sep {
    width: 5px;
    height: 28px;
    margin: 0 0 0 3px;
    border-left: 1px solid #777;
    flex: none;
}

.cass-row .sep {
    margin: 0 0 0 7px;
}

.sep.double {
    width: 6px;
    margin: 0 2px;
    border-right: 1px solid #777;
}

.style-select {
    appearance: none;
    width: 167px;
    height: 30px;
    padding: 0 5px 3px;
    flex: none;
    border: 1px solid #bbb;
    border-radius: 0;
    background: linear-gradient(45deg, transparent 42%, #555 42% 58%, transparent 58%) no-repeat 145px 11px / 7px 7px, linear-gradient(-45deg, transparent 42%, #555 42% 58%, transparent 58%) no-repeat 150px 11px / 7px 7px, #dedede;
    font-family: "Open Sans", sans-serif;
    font-size: 18px;
    color: #333;
}

.style-select.center {
    padding-left: 25px;
}

/* workspace */
.workspace {
    flex: 1;
    min-height: 0;
    display: flex;
    gap: 6px;
}

.left {
    flex: 1;
    min-width: 0;
    display: flex;
    flex-direction: column;
    gap: 7px;
}

.canvas-zone {
    flex: 1;
    min-height: 0;
    display: flex;
    gap: 7px;
    align-items: flex-start;
    padding: 4px 6px 0 1px;
    overflow: hidden;
}

.dock {
    width: 33px;
    background: #e6e6e9;
    border: 1px solid #333;
    flex: none;
}

.dock-col {
    display: flex;
    flex-direction: column;
    gap: 2px;
}

.grip-h {
    height: 13px;
    background: radial-gradient(#222 1px, transparent 1px) 0 0 / 3px 3px #5c5c5c;
    border: solid #5c5c5c;
    border-width: 3px 7px 3px 4px;
}

.dock button {
    width: 31px;
    height: 31px;
}

.dock svg {
    width: 23px;
    height: 23px;
}

.dock .letter {
    padding-bottom: 4px;
    font-family: "Open Sans", sans-serif;
    font-size: 25px;
    font-weight: bold;
    color: #444;
}

.drawing {
    flex: 1;
    align-self: stretch;
    min-width: 0;
    display: flex;
    flex-direction: column;
    border-right: 2px solid #e8e8e8;
    border-top: 2px solid #999;
}

.model-space {
    flex: 1;
    display: flex;
    align-items: flex-end;
    background: #000;
    overflow: hidden;
}

.layout-tabs {
    height: 23px;
    display: flex;
    background: #ececec;
    padding-left: 2px;
    border-top: 1px solid #777;
}

.nav {
    width: 20px;
    height: 20px;
    border: 1px solid #bbb;
}

.tab {
    position: relative;
    width: 78px;
    height: 20px;
    border-bottom: 1px solid #666;
    font-family: "Liberation Serif", serif;
}

.tab::after {
    content: "";
    position: absolute;
    right: -4px;
    top: 0;
    height: 19px;
    border-right: 2px solid #666;
    transform: skewX(-20deg);
}

.tab.active {
    width: 60px;
    margin-left: 3px;
    clip-path: polygon(0 0, 100% 0, 92% 100%, 10% 100%);
    background: #000;
    color: #fff;
    font-family: "Noto Sans CJK SC", sans-serif;
}

/* command window */
.command {
    height: 186px;
    flex: none;
    display: flex;
    font-size: 22px;
    line-height: 22px;
    color: #222;
}

.command span {
    font-family: "Liberation Mono", monospace;
    font-size: 19px;
    line-height: 0;
}

.cmd-grip {
    width: 22px;
    padding: 6px 2px;
    background: #989898;
    border-right: 1px solid #ccc;
}

.cmd-grip::before {
    content: "";
    display: block;
    height: 6px;
    background: radial-gradient(#222 1px, transparent 1px) 0 0 / 3px 3px;
}

.cmd-body {
    flex: 1;
    display: flex;
    flex-direction: column;
    background: #fff;
}

.cmd-log {
    flex: 1;
    display: flex;
    border-bottom: 1px solid #999;
}

.log-text {
    flex: 1;
    padding-left: 2px;
}

.log-text p {
    height: 22px;
    line-height: 20px;
    white-space: pre;
}

.cmd-line {
    height: 27px;
    display: flex;
    align-items: center;
    padding-left: 2px;
}

.cmd-line input {
    flex: 1;
    border: none;
    outline: none;
}

.scroll-v {
    width: 23px;
    display: flex;
    flex-direction: column;
    align-items: center;
    padding: 8px 0 6px;
    background: #f0f0f0;
}

.scroll-v i {
    width: 21px;
    height: 25px;
    margin: auto 0 8px;
    background: #c6c6c6;
}

.scroll-h {
    width: 122px;
    height: 26px;
    padding: 0 31px 0 11px;
    display: flex;
    align-items: center;
    gap: 6px;
    background: #f0f0f0;
}

.scroll-h i {
    width: 24px;
    height: 24px;
    margin-right: auto;
    background: #c6c6c6;
}

.scroll-v path, .scroll-h path {
    fill: none;
    stroke: #444;
    stroke-width: 3;
}

/* palette */
.palette {
    width: 306px;
    padding: 8px 0 5px;
    display: flex;
    flex-direction: column;
    color: #eee;
    font-size: 18px;
}

.palette-head {
    height: 35px;
    flex: none;
    padding: 6px 4px;
    background: #979797;
    border-bottom: 2px solid #eee;
    border-radius: 6px 0 0 0;
}

.palette-head .dots {
    width: 6px;
    height: 18px;
    background: radial-gradient(#222 1px, transparent 1px) 0 0 / 3px 3px;
}

.palette-body {
    flex: 1;
    min-height: 0;
    display: flex;
    background: #353535;
    border-top: 2px solid #222;
    border-bottom: 2px solid #eee;
}

.palette-main {
    flex: 1;
    display: flex;
    flex-direction: column;
}

.view-modes {
    height: 20px;
    display: flex;
    padding-left: 19px;
    background: #3c3c3c;
    border-right: 1px solid #222;
}

.view-modes button {
    width: 28px;
    height: 20px;
}

.view-modes .on {
    background: #282828;
}

.group {
    height: 39px;
    width: 100%;
    padding: 0 0 2px 10px;
    background: linear-gradient(135deg, transparent 50%, #777 50%) no-repeat right 2px bottom 2px / 9px 9px #3a3a3a;
    border-top: 1px solid #2a2a2a;
}

.group.open {
    background-color: #2b2b2b;
    border-bottom: 1px solid #222;
}

.tiles {
    flex: 1;
    padding: 12px 30px 0 26px;
    display: flex;
    flex-wrap: wrap;
    align-content: flex-start;
    column-gap: 25px;
    row-gap: 26px;
}

.tile {
    width: 93px;
    height: 119px;
    flex-direction: column;
    justify-content: space-between;
}

.thumb {
    width: 93px;
    height: 93px;
    display: flex;
    align-items: center;
    justify-content: center;
    background: #000;
}

.big-t {
    font-family: "Liberation Serif", serif;
    font-size: 36px;
    font-weight: bold;
}

.side-tabs {
    width: 38px;
    display: flex;
    flex-direction: column;
    background: #3a3a3a;
}

.side-tabs .dots {
    height: 20px;
    border: 6px solid #454545;
    border-width: 7px 9px;
    background: radial-gradient(#111 1px, transparent 1px) 0 0 / 3px 3px #454545;
}

.side-tabs .arrow {
    height: 13px;
    display: flex;
    align-items: center;
    justify-content: center;
    background: #2c2c2c;
}

.tab-list {
    flex: 1;
    min-height: 0;
    overflow: hidden;
}

.tab-list button {
    width: 38px;
    height: 90px;
    padding: 0 10px;
    line-height: 21px;
    word-break: break-all;
    background: #4a4a4a;
    border: 1px solid #222;
    border-width: 0 0 2px 1px;
}

.tab-list button:last-child {
    align-items: flex-start;
}

/* status bar */
.statusbar {
    height: 30px;
    flex: none;
    display: flex;
    background: linear-gradient(#8c8c8c, #6c6c6c);
    border-top: 1px solid #333;
}

.coords {
    width: 289px;
    padding: 0 0 0 16px;
    line-height: 34px;
    font-family: "Liberation Mono", monospace;
    font-size: 14px;
}

.statusbar button {
    width: 31px;
    background: linear-gradient(#b4b4b4, #8c8c8c);
    border-right: 1px solid #444;
    border-left: 1px solid #ccc;
}

.statusbar .on {
    background: linear-gradient(#d4ebf1, #9cc6d2);
}

.statusbar svg {
    width: 24px;
    height: 24px;
}

.statusbar svg.caret {
    width: 10px;
    height: 6px;
}

.status-right {
    margin-left: auto;
    display: flex;
}

.statusbar .model {
    width: 43px;
}

.gap {
    width: 26px;
}

.gap.thin {
    width: 8px;
}

.statusbar .scale {
    width: 76px;
    gap: 3px;
    font-family: "Liberation Mono", monospace;
    font-size: 15px;
}

.statusbar .gear {
    width: 51px;
    gap: 5px;
}

.statusbar .tray {
    width: 44px;
    background: #777;
}

.statusbar .mini {
    width: 16px;
}

/* rule editor window */
.window {
    position: absolute;
    left: 48px;
    top: 37px;
    right: 451px;
    bottom: 260px;
    display: flex;
    flex-direction: column;
    background: #fff;
    box-shadow: 0 0 6px rgba(0, 0, 0, 0.5);
}

.window-title {
    height: 40px;
    display: flex;
    align-items: center;
    padding: 0 2px 0 11px;
    color: #999;
}

.window-title h2 {
    flex: 1;
    padding-left: 6px;
}

.window-menu {
    height: 32px;
    padding-left: 9px;
    display: flex;
    align-items: center;
    gap: 20px;
    color: #777;
    border-bottom: 1px solid #888;
}

.window-tools {
    height: 33px;
    display: flex;
}

.tools-left {
    width: 149px;
    padding: 0 10px 0 3px;
    display: flex;
    align-items: center;
    justify-content: space-between;
    background: #f0f0f0;
    border-right: 1px solid #aaa;
}

.dots-v {
    width: 3px;
    height: 26px;
    border-left: 3px dotted #999;
}

.split {
    width: 1px;
    height: 26px;
    background: #999;
}

.help {
    font-family: "Open Sans", sans-serif;
    font-size: 24px;
    font-weight: 900;
    color: #cccc20;
    -webkit-text-stroke: 1px #111;
}

.window-body {
    flex: 1;
    min-height: 0;
    display: flex;
    border: 1px solid #777;
    border-width: 2px 4px 2px 1px;
    border-right-color: #fff;
}

.tree {
    width: 246px;
    margin: 4px 4px;
    padding: 1px 0 0 9px;
    display: flex;
    align-items: flex-start;
    gap: 3px;
    border: 2px solid #888;
    border-right: none;
    border-bottom-color: #ddd;
}

.dotted {
    width: 16px;
    height: 10px;
    border-bottom: 1px dotted #666;
}

.tree span {
    padding-left: 3px;
}

.flow {
    flex: 1;
    position: relative;
    background: #dadada;
}

.node {
    position: absolute;
    right: 132px;
    top: 85px;
    width: 129px;
    height: 55px;
    border: 1px solid #777;
    border-radius: 50%;
    background: #ffff80;
    box-shadow: 1px 2px 0 #777;
    text-align: center;
    font-size: 22px;
    line-height: 48px;
}

.window-status {
    height: 25px;
    margin-top: 5px;
    display: flex;
    align-items: center;
    gap: 4px;
    padding: 0 2px 0 4px;
    background: #f0f0f0;
    border-top: 1px solid #999;
}

.window-status span {
    flex: 1;
}

.window-status i {
    width: 41px;
    height: 24px;
    border: 1px solid #aaa;
    border-right-color: #fff;
    border-bottom-color: #fff;
}

.window-status svg {
    margin-left: 6px;
}

/* dialog */
.dialog {
    position: absolute;
    left: 298px;
    top: 73px;
    width: 921px;
    background: #eee;
    border: 1px solid #b4c850;
    box-shadow: 0 5px 16px rgba(0, 0, 0, 0.5);
    padding-bottom: 15px;
}

.dialog-title {
    height: 36px;
    padding: 0 13px 2px 4px;
    display: flex;
    align-items: center;
    justify-content: space-between;
    background: #fff;
}

.dialog-body {
    padding: 0 16px 0 15px;
    display: flex;
    justify-content: space-between;
}

.dialog-left {
    width: 450px;
    padding-top: 15px;
}

.fields {
    height: 30px;
    padding: 0 6px 0 5px;
    display: flex;
    justify-content: space-between;
}

.fields label {
    padding-top: 9px;
}

.fields input {
    width: 167px;
    height: 30px;
    padding: 0 2px 4px;
    border: 2px solid #777;
    border-right-color: #ddd;
    border-bottom-color: #ddd;
    background: #fff;
}

.combo {
    width: 102px;
    height: 27px;
    margin-top: 4px;
    display: flex;
    background: #fff;
    border: 2px solid #777;
    border-right-color: #999;
    border-bottom-color: #ccc;
}

.combo select {
    appearance: none;
    flex: 1;
    min-width: 0;
    border: none;
    background: #fff;
}

.combo i, .btn {
    background: #eee;
    border: 1px solid #fff;
    border-right: 2px solid #777;
    border-bottom: 2px solid #777;
}

.combo i {
    width: 24px;
    display: flex;
    align-items: center;
    justify-content: center;
}

.params {
    height: 395px;
    margin-top: 21px;
    background: #fff;
}

.params-head {
    height: 27px;
    padding-left: 3px;
    display: flex;
    align-items: center;
    gap: 8px;
    background: #b3b3b3;
}

.params-head i {
    width: 14px;
    height: 15px;
    display: flex;
    align-items: center;
    justify-content: center;
    background: #cc2030;
    border: 2px solid #611;
    margin-bottom: 5px;
}

.params-row {
    height: 27px;
    display: flex;
    line-height: 27px;
    border-left: 21px solid #b3b3b3;
    border-bottom: 1px solid #ddd;
}

.params-row span {
    padding-left: 4px;
    width: 203px;
    border-right: 2px solid #e4e4e4;
}

.params-row span:last-child {
    flex: 1;
    padding-left: 7px;
    border: none;
}

.params-row b {
    font-weight: normal;
    color: #338;
}

.options {
    padding: 11px 19px 0 0;
    display: flex;
    justify-content: space-between;
}

.checks label {
    height: 30px;
    display: flex;
    gap: 9px;
    line-height: 22px;
}

.checks input {
    appearance: none;
    width: 16px;
    height: 17px;
    margin-top: 2px;
    border: 2px solid #777;
    border-right: 1px solid #ddd;
    border-bottom: 1px solid #ddd;
    background: #fff;
}

.checks input:checked::after {
    content: "";
    display: block;
    width: 5px;
    height: 9px;
    margin: 0 0 0 4px;
    border: solid #111;
    border-width: 0 3px 3px 0;
    transform: rotate(40deg);
}

.convert {
    display: flex;
    gap: 4px;
    padding-top: 18px;
}

.btn {
    width: 105px;
    height: 33px;
}

.btn:disabled {
    margin-right: 17px;
    color: #999;
    text-shadow: 1px 1px 0 #fff;
}

.btn.small {
    width: 30px;
}

.dialog-right {
    width: 415px;
    padding-top: 15px;
}

fieldset {
    border: 1px solid #999;
    padding: 13px 14px 0 17px;
    box-shadow: inset 1px 0 0 #fff;
}

fieldset.second {
    margin-top: 8px;
    padding-top: 14px;
    padding-bottom: 17px;
}

legend {
    margin-left: -10px;
    padding: 0 4px;
    line-height: 18px;
    height: 18px;
}

.list {
    background: #fff;
    border: 2px solid #777;
    border-right: 1px solid #ddd;
    border-bottom: 1px solid #ddd;
}

.list.tall {
    height: 298px;
}

.list.short {
    height: 115px;
}

.list table {
    width: 100%;
    table-layout: fixed;
    border-collapse: separate;
    border-spacing: 0;
}

.c-name {
    width: 112px;
}

.c-layer {
    width: 113px;
}

.c-type {
    width: 141px;
}

.c-wide {
    width: 260px;
}

.list th {
    height: 30px;
    padding: 0 8px;
    background: #eee;
    border: 1px solid #fff;
    border-right-color: #666;
    border-bottom: 2px solid #666;
    font-weight: normal;
    text-align: left;
    white-space: pre;
}

.list .mid {
    text-align: center;
}

.list tbody td {
    height: 26px;
    padding: 0 3px;
    border-top: 3px solid #fff;
}

.list .sel {
    background: #3a8eee;
    background-clip: padding-box;
    border-right: 1px solid #7ab4f4;
    color: #e8f2ff;
}

.list .editor {
    position: relative;
}

.combo.cell {
    position: absolute;
    left: 0;
    top: 0;
    width: 139px;
    height: 34px;
    margin: 0;
}

.dropdown {
    position: absolute;
    left: -1px;
    top: 35px;
    width: 142px;
    padding: 0 0 1px 4px;
    list-style: none;
    background: #fff;
    border: 1px solid #555;
    font-family: "Open Sans", sans-serif;
    color: #333;
    z-index: 2;
}

.dropdown li {
    height: 24px;
    line-height: 24px;
}

.cursor {
    position: absolute;
    left: 89px;
    top: 6px;
    z-index: 3;
}

.list-buttons {
    display: flex;
    justify-content: flex-end;
    gap: 6px;
    margin: 6px 0 0;
}

.dialog-foot {
    padding: 14px 0 0 382px;
    display: flex;
    gap: 18px;
}

.btn.wide {
    width: 106px;
}

/* input method bar */
.ime {
    position: absolute;
    right: 0;
    bottom: 158px;
    width: 265px;
    height: 33px;
    padding: 0 0 0 25px;
    display: flex;
    align-items: center;
    gap: 8px;
    background: #f8fbff;
    color: #2b6cb8;
    font-weight: bold;
    font-size: 20px;
}

.ime svg {
    width: 24px;
    height: 25px;
    fill: #2b6cb8;
}

.ime .ime-logo {
    position: absolute;
    left: -22px;
    top: -6px;
    width: 42px;
    height: 42px;
}

.ime-logo text {
    font: bold 34px "Open Sans", sans-serif;
    fill: #fff;
}

.ime .tiny {
    font: bold 11px "Liberation Sans", sans-serif;
}
```
